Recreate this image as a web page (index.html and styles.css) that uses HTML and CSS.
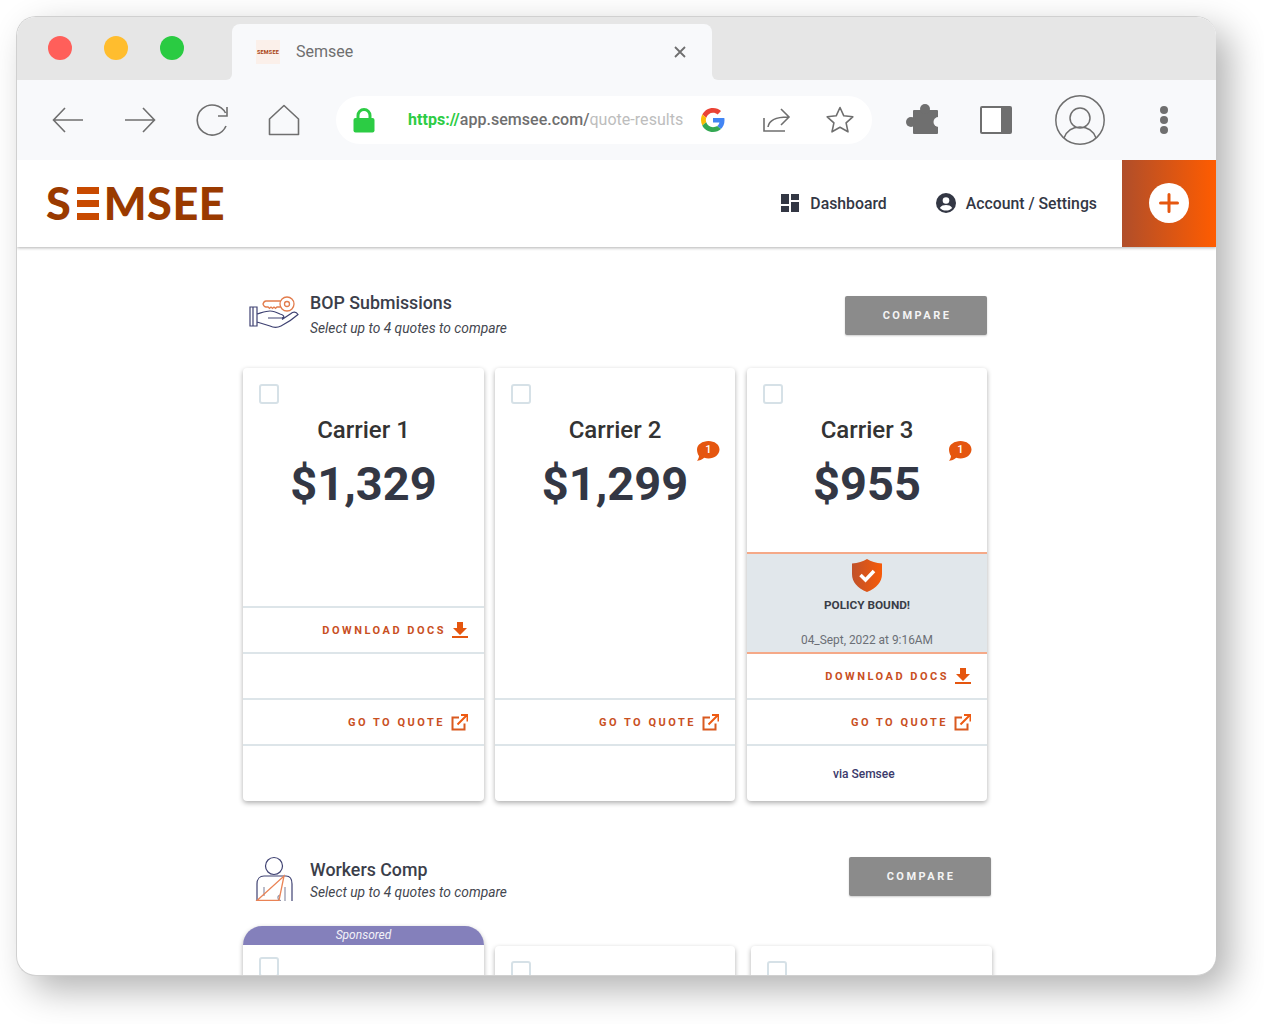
FILE: index.html
```html
<!DOCTYPE html>
<html lang="en">
<head>
<meta charset="utf-8">
<title>Semsee</title>
<link rel="stylesheet" href="styles.css">
</head>
<body>
<div class="window">
  <div class="tabstrip">
    <div class="strip-left">
      <span class="dot dot-red"></span><span class="dot dot-yellow"></span><span class="dot dot-green"></span>
    </div>
    <div class="tab-slot">
      <div class="tab">
        <span class="favicon">SEMSEE</span>
        <span class="tab-title">Semsee</span>
        <svg class="tab-close" width="12" height="12" viewBox="0 0 12 12"><path d="M1 1l10 10M11 1L1 11" stroke="#6f6f6f" stroke-width="1.8" fill="none"/></svg>
      </div>
    </div>
    <div class="strip-right"></div>
  </div>

  <div class="toolbar">
    <div class="tool-group">
      <span class="tool"><svg width="32" height="26" viewBox="0 0 32 26"><path d="M31 13H2M13 1L1.500 13 13 25" stroke="#6f6f6f" stroke-width="1.600" fill="none"/></svg></span>
      <span class="tool"><svg width="32" height="26" viewBox="0 0 32 26"><path d="M1 13h29M19 1l11.500 12L19 25" stroke="#6f6f6f" stroke-width="1.600" fill="none"/></svg></span>
      <span class="tool"><svg width="32" height="32" viewBox="0 0 32 32"><path d="M30 22A15 15 0 1 1 29.500 9M31 3v9H22" stroke="#6f6f6f" stroke-width="1.600" fill="none"/></svg></span>
      <span class="tool"><svg width="32" height="32" viewBox="0 0 32 32"><path d="M16 1.500L1.500 15v15.500h29V15z" stroke="#6f6f6f" stroke-width="1.600" stroke-linejoin="round" fill="none"/></svg></span>
    </div>
    <div class="omnibox">
      <svg class="lock" width="22" height="25" viewBox="0 0 22 25"><path d="M5 11V7.500a6 6 0 0 1 12 0V11" stroke="#2ccc44" stroke-width="3" fill="none"/><rect x="0.500" y="10" width="21" height="14.500" rx="2" fill="#2ccc44"/></svg>
      <span class="url"><span class="url-scheme">https://</span><span class="url-host">app.semsee.com/</span><span class="url-path">quote-results</span></span>
      <svg class="omni-g" width="24" height="24" viewBox="0 0 48 48"><path fill="#EA4335" d="M24 9.500c3.500 0 6.700 1.200 9.200 3.600l6.900-6.900C35.900 2.400 30.500 0 24 0 14.600 0 6.500 5.400 2.600 13.200l8 6.200C12.400 13.700 17.700 9.500 24 9.500z"/><path fill="#4285F4" d="M47 24.500c0-1.600-.1-3.100-.4-4.500H24v9h12.900c-.6 3-2.200 5.500-4.700 7.200l7.700 6c4.500-4.200 7.100-10.300 7.100-17.700z"/><path fill="#FBBC05" d="M10.500 28.600c-.5-1.500-.8-3-.8-4.600s.3-3.200.8-4.600l-8-6.200C1 16.400 0 20.100 0 24s.9 7.600 2.600 10.800z"/><path fill="#34A853" d="M24 48c6.500 0 11.900-2.100 15.900-5.800l-7.700-6c-2.100 1.400-4.900 2.300-8.200 2.300-6.300 0-11.600-4.200-13.500-9.900l-8 6.200C6.500 42.600 14.600 48 24 48z"/></svg>
      <svg class="omni-share" width="28" height="24" viewBox="0 0 28 24"><path d="M1 10v13h21" stroke="#6f6f6f" stroke-width="1.600" fill="none"/><path d="M5 20c1-7 7-10 20-10M18 2l8 8-8 8" stroke="#6f6f6f" stroke-width="1.600" fill="none" transform="translate(0 -1)"/></svg>
      <svg class="omni-star" width="28" height="28" viewBox="0 0 28 28"><path d="M14 1.500l3.800 8.300 9 1-6.700 6.100 1.900 8.900L14 21.300l-8 4.500 1.900-8.900L1.200 10.800l9-1z" stroke="#6f6f6f" stroke-width="1.600" stroke-linejoin="round" fill="none"/></svg>
    </div>
    <div class="tool-group tool-group-right">
      <span class="tool"><svg width="34" height="32" viewBox="0 0 34 32"><rect x="8" y="6" width="25" height="24" rx="1" fill="#6f6f6f"/><circle cx="20" cy="5" r="5" fill="#6f6f6f"/><circle cx="6" cy="18" r="5" fill="#6f6f6f"/><circle cx="33.500" cy="18" r="5" fill="#f8f9fb"/></svg></span>
      <span class="tool"><svg width="32" height="28" viewBox="0 0 32 28"><rect x="0" y="0" width="32" height="28" rx="2" fill="#6f6f6f"/><rect x="2" y="2" width="19" height="24" fill="#fff"/></svg></span>
      <span class="tool tool-avatar"><svg width="50" height="50" viewBox="0 0 50 50"><circle cx="25" cy="25" r="24.200" stroke="#6f6f6f" stroke-width="1.500" fill="none"/><circle cx="25" cy="23" r="10" stroke="#6f6f6f" stroke-width="1.500" fill="none"/><path d="M9 43c3-8 9-11 16-11s13 3 16 11" stroke="#6f6f6f" stroke-width="1.500" fill="none"/></svg></span>
      <span class="tool"><svg width="8" height="28" viewBox="0 0 8 28"><circle cx="4" cy="4" r="4" fill="#6f6f6f"/><circle cx="4" cy="14" r="4" fill="#6f6f6f"/><circle cx="4" cy="24" r="4" fill="#6f6f6f"/></svg></span>
    </div>
  </div>

  <header class="appnav">
    <div class="logo"><span>S</span><span class="logo-bars"><i></i><i></i><i></i></span><span class="logo-rest">MSEE</span></div>
    <nav class="navlinks">
      <a class="navlink"><svg width="18" height="18" viewBox="0 0 18 18"><path d="M0 0h8v10H0zM0 12h8v6H0zM10 0h8v6h-8zM10 8h8v10h-8z" fill="#333744"/></svg>Dashboard</a>
      <a class="navlink navlink-account"><svg width="20" height="20" viewBox="0 0 20 20"><circle cx="10" cy="10" r="10" fill="#333744"/><circle cx="10" cy="7.500" r="3.300" fill="#fff"/><path d="M3.800 15c1.500-2.400 3.700-3 6.200-3s4.700.6 6.200 3c-1.600 1.700-3.800 2.600-6.200 2.600S5.400 16.700 3.800 15z" fill="#fff"/></svg>Account / Settings</a>
    </nav>
    <div class="addblock"><span class="addcircle"><svg width="20" height="20" viewBox="0 0 20 20"><path d="M10 1.500v17M1.500 10h17" stroke="#e5560f" stroke-width="3" stroke-linecap="round"/></svg></span></div>
  </header>

  <main class="content">
    <section class="section">
      <div class="sec-head">
        <svg class="sec-icon" width="50" height="38" viewBox="0 0 50 38"><g fill="none" stroke="#e27c4c" stroke-width="1.300"><path d="M31.500 5H17c-1.500 0-2.500 1.500-3 3 .5 1.500 1.500 3 3 3h2l1.500 1.300L22 11l1.500 1.300L25 11l1.500 1.300L28 11h3.500"/><circle cx="38" cy="8" r="7"/><circle cx="38" cy="8" r="2.500"/></g><g fill="none" stroke="#3f4272" stroke-width="1.200"><path d="M1 11h7v19H1zM4 11v19M8 18c4-1 9-3 13-3 3 0 6 1 10 3 4 1 5 3 2 4H19M8 26l13 4c4 2 7 2 11 0 6-3 12-7 17-11.500-2-3-5-3-7-1l-9 6"/></g></svg>
        <div class="sec-text">
          <h2 class="sec-title">BOP Submissions</h2>
          <p class="sec-sub">Select up to 4 quotes to compare</p>
        </div>
        <button class="compare">COMPARE</button>
      </div>
      <div class="cards">
        <article class="card">
          <div class="card-top">
            <span class="check"></span>
            <h3 class="carrier">Carrier 1</h3>
            <div class="price">$1,329</div>
          </div>
          <div class="row"><a class="action">DOWNLOAD DOCS<svg class="act-dl" width="16" height="16" viewBox="0 0 16 16"><path d="M5 0h6v6h4l-7 7-7-7h4zM0 14h16v2H0z" fill="#e5560f"/></svg></a></div>
          <div class="row"></div>
          <div class="row"><a class="action">GO TO QUOTE<svg class="act-ext" width="17" height="17" viewBox="0 0 17 17"><path d="M13.500 9.500V15.500H1.500V3.500H8" stroke="#d95a20" stroke-width="2" fill="none"/><path d="M6.500 10.500L15.500 1.500M10 1h6.500v6.500" stroke="#ee5a12" stroke-width="2" fill="none"/></svg></a></div>
          <div class="row row-last"></div>
        </article>
        <article class="card">
          <div class="card-top">
            <span class="check"></span>
            <h3 class="carrier">Carrier 2</h3>
            <div class="price">$1,299</div>
            <span class="badge"><svg width="24" height="21" viewBox="0 0 24 21"><path d="M12.500 1c6 0 11 3.500 11 8.500S18.500 18.500 12.500 18.500c-1.500 0-3-.2-4.300-.7C6 19.800 3.500 20.800.8 20.800c1.200-1 2-2.700 2.200-4.800C1.800 14.400 1 12 1 9.500 1 4.500 6.500 1 12.500 1z" fill="#e5560f"/></svg><b>1</b></span>
          </div>
          <div class="row"><a class="action">GO TO QUOTE<svg class="act-ext" width="17" height="17" viewBox="0 0 17 17"><path d="M13.500 9.500V15.500H1.500V3.500H8" stroke="#d95a20" stroke-width="2" fill="none"/><path d="M6.500 10.500L15.500 1.500M10 1h6.500v6.500" stroke="#ee5a12" stroke-width="2" fill="none"/></svg></a></div>
          <div class="row row-last"></div>
        </article>
        <article class="card">
          <div class="card-top">
            <span class="check"></span>
            <h3 class="carrier">Carrier 3</h3>
            <div class="price">$955</div>
            <span class="badge"><svg width="24" height="21" viewBox="0 0 24 21"><path d="M12.500 1c6 0 11 3.500 11 8.500S18.500 18.500 12.500 18.500c-1.500 0-3-.2-4.300-.7C6 19.800 3.500 20.800.8 20.800c1.200-1 2-2.700 2.200-4.800C1.800 14.400 1 12 1 9.500 1 4.500 6.500 1 12.500 1z" fill="#e5560f"/></svg><b>1</b></span>
          </div>
          <div class="policy">
            <svg width="30" height="33" viewBox="0 0 30 33"><defs><linearGradient id="shield" x1="0" x2="1" y1="0" y2="0"><stop offset="0" stop-color="#c0522a"/><stop offset="1" stop-color="#f75a08"/></linearGradient></defs><path d="M15 0c4 2.500 9 4 15 4.500V15c0 8-5.500 14-15 18C5.500 29 0 23 0 15V4.500C6 4 11 2.500 15 0z" fill="url(#shield)"/><path d="M8.500 16l5 5 8.500-9" stroke="#fff" stroke-width="3.500" fill="none"/></svg>
            <div class="policy-title">POLICY BOUND!</div>
            <div class="policy-date">04_Sept, 2022 at 9:16AM</div>
          </div>
          <div class="row row-plain"><a class="action">DOWNLOAD DOCS<svg class="act-dl" width="16" height="16" viewBox="0 0 16 16"><path d="M5 0h6v6h4l-7 7-7-7h4zM0 14h16v2H0z" fill="#e5560f"/></svg></a></div>
          <div class="row"><a class="action">GO TO QUOTE<svg class="act-ext" width="17" height="17" viewBox="0 0 17 17"><path d="M13.500 9.500V15.500H1.500V3.500H8" stroke="#d95a20" stroke-width="2" fill="none"/><path d="M6.500 10.500L15.500 1.500M10 1h6.500v6.500" stroke="#ee5a12" stroke-width="2" fill="none"/></svg></a></div>
          <div class="row row-last row-via"><span class="via">via Semsee</span></div>
        </article>
      </div>
    </section>

    <section class="section section-second">
      <div class="sec-head">
        <svg class="sec-icon" width="50" height="50" viewBox="0 0 50 50"><g fill="none" stroke="#3f4272" stroke-width="1.200"><circle cx="25" cy="15" r="8.500"/><path d="M8 50V33c0-5 3-8 7-8h22c4 0 6 3 6 8v17"/></g><g fill="none" stroke="#8f92a8" stroke-width="1.200"><path d="M15 36v9M36 36v14M31 44a2.500 2.500 0 0 0-2 3c0 2 1 2.500 3 2.500"/></g><path d="M8 49.500L35 25l-5 24.500z" fill="none" stroke="#ea8355" stroke-width="1.300"/></svg>
        <div class="sec-text sec-text-low">
          <h2 class="sec-title">Workers Comp</h2>
          <p class="sec-sub">Select up to 4 quotes to compare</p>
        </div>
        <button class="compare">COMPARE</button>
      </div>
      <div class="cards cards-second">
        <article class="card card-sponsored">
          <div class="ribbon">Sponsored</div>
          <div class="card-top"><span class="check"></span></div>
        </article>
        <article class="card card-plain"><div class="card-top"><span class="check"></span></div></article>
        <article class="card card-plain"><div class="card-top"><span class="check"></span></div></article>
      </div>
    </section>
  </main>
</div>
</body>
</html>
```

FILE: styles.css
```css
* { box-sizing: border-box; }
html, body { margin: 0; padding: 0; height: 100%; background: #fff; overflow: hidden; }
body { padding: 16px 48px 48px 16px; font-family: Roboto, "Liberation Sans", sans-serif; color: #333744; }

.window {
  width: 1200px;
  height: 960px;
  border: 1px solid #d0d0d0;
  border-right: 0;
  border-radius: 20px;
  overflow: hidden;
  background: #fff;
  box-shadow: 14px 14px 36px rgba(0, 0, 0, .3);
  display: flex;
  flex-direction: column;
  position: relative;
}

/* tab strip */
.tabstrip { display: flex; height: 63px; background: #f8f9fb; flex: none; }
.strip-left {
  width: 215px;
  background: #e6e6e6;
  border-bottom-right-radius: 6px;
  display: flex;
  gap: 32px;
  padding: 19px 0 0 31px;
}
.dot { width: 24px; height: 24px; border-radius: 50%; }
.dot-red { background: #ff5f5a; }
.dot-yellow { background: #ffbd2e; }
.dot-green { background: #2acb42; }
.tab-slot { width: 480px; background: #e6e6e6; padding-top: 7px; }
.tab {
  height: 56px;
  background: #f8f9fb;
  border-radius: 8px 8px 0 0;
  display: flex;
  align-items: center;
  padding: 0 26px 0 24px;
}
.favicon {
  width: 24px;
  height: 24px;
  background: #fbf0ea;
  color: #a8410f;
  font-size: 5.500px;
  font-weight: 700;
  letter-spacing: .2px;
  display: flex;
  align-items: center;
  justify-content: center;
  flex: none;
}
.tab-title { margin-left: 16px; padding-bottom: 1px; font-size: 16px; color: #6f6f6f; flex: 1; }
.tab-close { flex: none; }
.strip-right { flex: 1; background: #e6e6e6; border-bottom-left-radius: 6px; }

/* toolbar */
.toolbar {
  height: 80px;
  flex: none;
  background: #f8f9fb;
  display: flex;
  align-items: center;
  padding-left: 31px;
  position: relative;
  z-index: 1;
}
.tool-group { display: flex; align-items: center; gap: 32px; }
.tool-group-right { gap: 34px; margin-left: 30px; }
.tool { width: 40px; height: 50px; display: flex; align-items: center; justify-content: center; }
.tool-avatar { width: 50px; margin: 0 5px; }
.omnibox {
  margin-left: 32px;
  width: 536px;
  height: 48px;
  background: #fff;
  border-radius: 24px;
  display: flex;
  align-items: center;
  padding-left: 17px;
}
.lock { flex: none; }
.url { margin-left: 33px; padding-bottom: 2px; font-size: 16px; letter-spacing: .03px; white-space: nowrap; width: 282px; }
.url-scheme { color: #2ccc44; font-weight: 700; }
.url-host { color: #6f6f6f; font-weight: 500; }
.url-path { color: #bdbdbd; }
.omni-g { margin-left: 11px; flex: none; }
.omni-share { margin-left: 38px; flex: none; }
.omni-star { margin-left: 35px; flex: none; }

/* app nav */
.appnav {
  height: 87px;
  flex: none;
  background: #fff;
  display: flex;
  align-items: center;
  padding-left: 29px;
  box-shadow: 0 1px 3px rgba(0, 0, 0, .3);
  position: relative;
}
.logo {
  display: flex;
  align-items: center;
  padding-bottom: 1px;
  font-family: "Lato", sans-serif;
  font-weight: 900;
  font-size: 45px;
  line-height: 40px;
  color: #9a3a00;
}
.logo-rest { letter-spacing: .5px; }
.logo-bars {
  display: flex;
  flex-direction: column;
  justify-content: space-between;
  width: 22px;
  height: 33px;
  margin: 0 5px 0 6px;
}
.logo-bars i { display: block; height: 7px; background: #c84a00; }
.navlinks { margin-left: auto; padding-bottom: 1px; display: flex; align-items: center; gap: 49px; }
.navlink {
  display: flex;
  align-items: center;
  gap: 11px;
  font-size: 15.800px;
  font-weight: 500;
  color: #333744;
}
.navlink-account { gap: 10px; }
.addblock {
  width: 94px;
  height: 87px;
  margin-left: 25px;
  padding-bottom: 1px;
  background: linear-gradient(90deg, #b04e2a, #ff5c00);
  display: flex;
  align-items: center;
  justify-content: center;
}
.addcircle {
  width: 40px;
  height: 40px;
  border-radius: 50%;
  background: #fff;
  display: flex;
  align-items: center;
  justify-content: center;
}

/* content */
.content { flex: 1; overflow: hidden; padding: 48px 0 0 226px; }
.section-second { margin-top: 55px; }
.sec-head { display: flex; align-items: center; height: 40px; width: 744px; padding-left: 6px; }
.section-second .sec-head { width: 748px; }
.sec-icon { flex: none; }
.sec-text { margin-left: 11px; flex: 1; }
.sec-text-low { padding-top: 10px; }
.sec-title { margin: 0; font-size: 17.800px; line-height: 20px; font-weight: 500; color: #3b3e4a; }
.sec-sub { margin: 5px 0 0; font-size: 13.800px; line-height: 20px; font-style: italic; color: #44474f; }
.sec-text-low .sec-sub { margin-top: 2px; }
.compare {
  width: 142px;
  height: 39px;
  padding: 1px 0 0 2px;
  background: #8b8b8b;
  border: 0;
  border-radius: 2px;
  color: #f4f4f4;
  font-family: Roboto, sans-serif;
  font-size: 11px;
  font-weight: 700;
  letter-spacing: 2.500px;
  box-shadow: 0 1px 2px rgba(0, 0, 0, .2);
}

.cards { display: grid; grid-template-columns: 241px 240px 241px; column-gap: 11px; margin-top: 33px; }
.cards-second { margin-top: 30px; align-items: start; }
.card {
  height: 433px;
  background: #fff;
  border-radius: 4px;
  box-shadow: 0 2px 5px rgba(0, 0, 0, .32);
  display: flex;
  flex-direction: column;
}
.card:nth-child(3) { margin-left: 1px; }
.cards-second .card:nth-child(3) { margin-left: 5px; margin-right: -5px; }
.card-top { position: relative; flex: 1; padding-top: 16px; text-align: center; }
.check {
  display: block;
  width: 20px;
  height: 20px;
  margin-left: 16px;
  border: 2px solid #d6e1e7;
  border-radius: 3px;
  background: #fff;
}
.carrier { margin: 11px 0 0; font-size: 24px; line-height: 30px; font-weight: 500; color: #333333; }
.price { margin-top: 12px; font-size: 47px; line-height: 54px; font-weight: 700; color: #333744; }
.badge { position: absolute; top: 72px; right: 15px; width: 24px; height: 21px; }
.badge svg { display: block; }
.badge b {
  position: absolute;
  left: 1px;
  right: 0;
  top: 3px;
  text-align: center;
  font-size: 11px;
  line-height: 13px;
  font-weight: 500;
  color: #fff;
}
.row {
  height: 46px;
  flex: none;
  border-top: 2px solid #dde5e9;
  display: flex;
  align-items: center;
  justify-content: flex-end;
  padding-right: 16px;
}
.row-plain { border-top: 0; height: 44px; }
.row-last { height: 57px; }
.row-via { justify-content: flex-start; padding: 0 0 0 86px; }
.action {
  display: flex;
  align-items: center;
  gap: 6px;
  font-size: 11px;
  font-weight: 700;
  letter-spacing: 2.500px;
  color: #c9501f;
}
.act-dl, .act-ext { flex: none; }
.via { font-size: 12px; font-weight: 500; color: #3b3a6b; }
.policy {
  height: 102px;
  flex: none;
  background: #e1e7eb;
  border-top: 2px solid #f5a988;
  border-bottom: 2px solid #f5a988;
  display: flex;
  flex-direction: column;
  align-items: center;
  padding-top: 5px;
}
.policy svg { display: block; }
.policy-title { margin-top: 6px; font-size: 11.800px; line-height: 14px; font-weight: 700; color: #3a3d47; }
.policy-date { margin-top: 21px; font-size: 11.900px; line-height: 14px; color: #6b6f76; }

.card-sponsored { border-radius: 20px 20px 4px 4px; }
.ribbon {
  height: 19px;
  flex: none;
  background: #8480bb;
  border-radius: 20px 20px 0 0;
  color: #f2f1f8;
  font-size: 12px;
  line-height: 19px;
  font-style: italic;
  text-align: center;
}
.card-sponsored .card-top { padding-top: 12px; }
.card-plain { margin-top: 20px; }
.card-plain .card-top { padding-top: 15px; }
```
